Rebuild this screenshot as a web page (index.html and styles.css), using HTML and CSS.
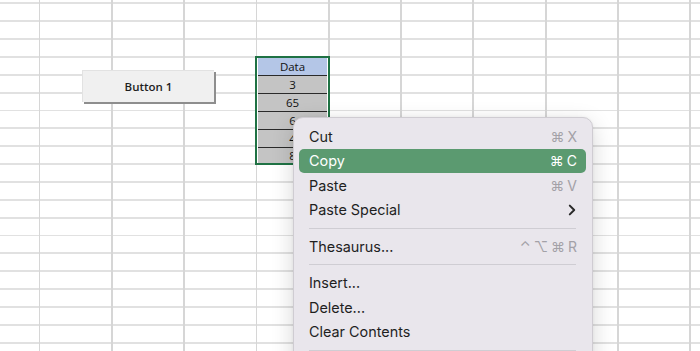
FILE: index.html
```html
<!DOCTYPE html>
<html>
<head>
<meta charset="utf-8">
<link rel="stylesheet" href="styles.css">
</head>
<body>
<div class="sheet">
  <div class="shape-button"><span>Button 1</span></div>

  <div class="range">
    <div class="cell head">Data</div>
    <div class="cell">3</div>
    <div class="cell">65</div>
    <div class="cell">6</div>
    <div class="cell">4</div>
    <div class="cell last">8</div>
  </div>

  <div class="menu">
    <div class="item"><span class="label">Cut</span><span class="keys"><span>⌘</span><span>X</span></span></div>
    <div class="item active"><span class="label">Copy</span><span class="keys"><span>⌘</span><span>C</span></span></div>
    <div class="item"><span class="label">Paste</span><span class="keys"><span>⌘</span><span>V</span></span></div>
    <div class="item"><span class="label">Paste Special</span>
      <svg class="chev" width="8" height="12" viewBox="0 0 8 12"><path d="M1.8 1.6 L6.2 6 L1.8 10.4" fill="none" stroke="#2a2a2a" stroke-width="2" stroke-linecap="round" stroke-linejoin="round"/></svg>
    </div>
    <div class="sep"></div>
    <div class="item"><span class="label">Thesaurus...</span><span class="keys"><span>⌃</span><span>⌥</span><span>⌘</span><span>R</span></span></div>
    <div class="sep"></div>
    <div class="item"><span class="label">Insert...</span></div>
    <div class="item"><span class="label">Delete...</span></div>
    <div class="item"><span class="label">Clear Contents</span></div>
    <div class="sep"></div>
  </div>
</div>
</body>
</html>
```

FILE: styles.css
```css
html, body {
  margin: 0;
  padding: 0;
}

body {
  width: 700px;
  height: 351px;
  overflow: hidden;
  background: #ffffff;
}

.sheet {
  position: relative;
  width: 700px;
  height: 351px;
  overflow: hidden;
  background-color: #ffffff;
  background-image:
    repeating-linear-gradient(to right, transparent 0 38.6px, #d6d6d6 38.6px 40.4px, transparent 40.4px 72.3px),
    repeating-linear-gradient(to bottom, transparent 0 2.4px, #e1e1e1 2.4px 4.2px, transparent 4.2px 17.86px);
}

/* floating form button */
.shape-button {
  position: absolute;
  left: 82px;
  top: 70px;
  width: 132px;
  height: 32px;
  background: #f0f0f0;
  border-top: 1px solid #e2e2e2;
  border-left: 1px solid #e2e2e2;
  box-shadow: 2px 2px 0 #8e8e8e;
  display: flex;
  align-items: center;
  justify-content: center;
  font-family: "Open Sans", "Liberation Sans", sans-serif;
  font-size: 11.5px;
  font-weight: 600;
  color: #1e1e1e;
  box-sizing: border-box;
}

/* selected range */
.range {
  position: absolute;
  left: 255px;
  top: 56px;
  width: 75px;
  height: 109px;
  box-sizing: border-box;
  border: 2px solid #1f7244;
  display: flex;
  flex-direction: column;
  padding: 0 1px 0 1px;
  background: #ffffff;
}

.cell {
  height: 17px;
  border-bottom: 1px solid #2a2a2a;
  background: #c4c4c4;
  display: flex;
  align-items: center;
  justify-content: center;
  font-family: "Open Sans", "Liberation Sans", sans-serif;
  font-size: 11.5px;
  font-weight: 500;
  color: #111;
  line-height: 1;
}

.cell.head {
  background: #b4c6e7;
}

.cell.last {
  border-bottom: none;
  height: 15px;
}

/* context menu */
.menu {
  position: absolute;
  left: 293px;
  top: 117px;
  width: 300px;
  height: 260px;
  box-sizing: border-box;
  padding: 6px 6px 0 5px;
  background: #e9e6ec;
  border: 1px solid #cfccd2;
  border-radius: 10px;
  box-shadow: 0 6px 22px rgba(0, 0, 0, 0.16), 0 0 3px rgba(0, 0, 0, 0.06);
  font-family: "Inter", "Noto Sans", sans-serif;
  font-size: 14.4px;
  color: #1f1f1f;
}

.item {
  height: 24.5px;
  display: flex;
  align-items: center;
  justify-content: space-between;
  padding: 0 9px 0 10px;
  border-radius: 5px;
}

.item.active {
  background: #5b9a70;
  color: #ffffff;
}

.keys {
  display: flex;
  gap: 3px;
  color: #a3a1a7;
  font-family: "Inter", "DejaVu Sans", sans-serif;
  font-size: 14px;
}

.item.active .keys {
  color: #ffffff;
}

.chev {
  margin-right: 1px;
}

.sep {
  height: 12px;
  display: flex;
  align-items: center;
  padding: 0 10px;
}

.sep::before {
  content: "";
  flex: 1;
  height: 1px;
  background: #cfcdd3;
}
```
